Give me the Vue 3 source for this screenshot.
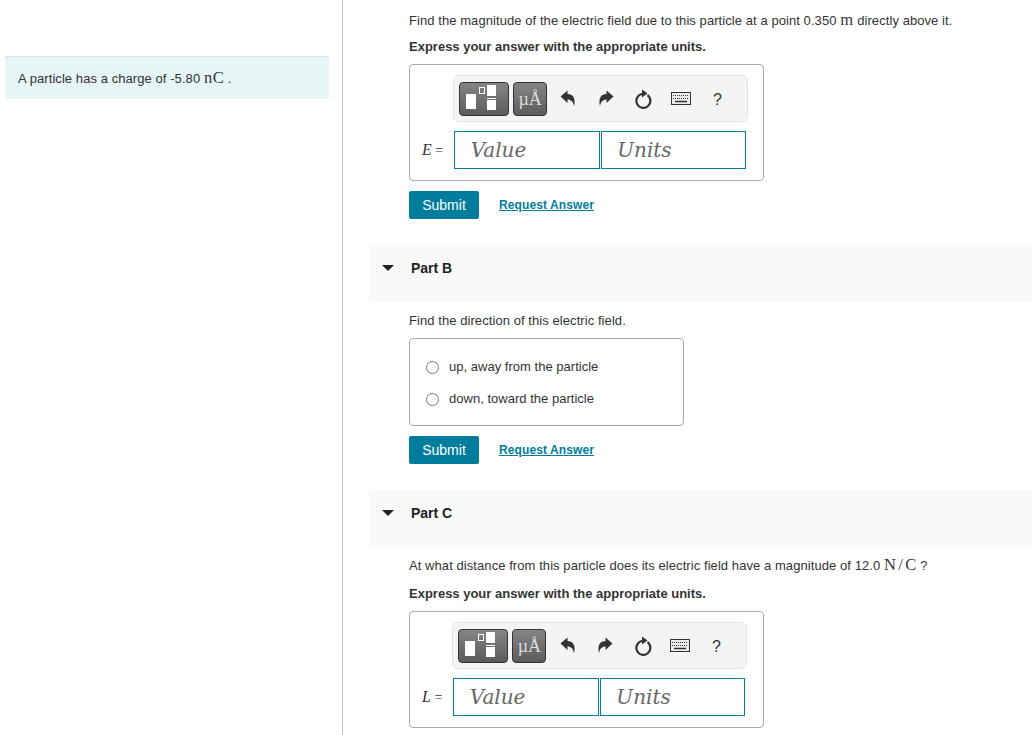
<template>
  <div class="page">
    <aside class="sidebar">
      <p class="intro">A particle has a charge of -5.80 <span class="math">nC</span> .</p>
    </aside>

    <main class="content">
      <section v-for="part in parts" :key="part.id" class="part">
        <header v-if="part.title" class="part-head">
          <span class="caret"></span>
          <h3>{{ part.title }}</h3>
        </header>

        <div class="part-body">
          <p class="prompt" :class="{ 'prompt-tall': part.tall }">
            {{ part.before }}<span v-if="part.math" class="math">{{ part.math }}</span>{{ part.after }}
          </p>
          <p v-if="part.symbol" class="express">Express your answer with the appropriate units.</p>

          <div v-if="part.symbol" class="answer-box">
            <div class="toolbar">
              <button class="tool tool-template" type="button" aria-label="Templates">
                <svg width="50" height="34" viewBox="0 0 50 34">
                  <rect x="7" y="12" width="10" height="15" fill="#fff" />
                  <rect x="20.5" y="5.5" width="5" height="6" fill="none" stroke="#fff" />
                  <rect x="28" y="3" width="9" height="11" fill="#fff" />
                  <rect x="28" y="16" width="9" height="1" fill="#fff" />
                  <rect x="28" y="18" width="9" height="10" fill="#fff" />
                </svg>
              </button>
              <button class="tool tool-symbol" type="button">&micro;&Aring;</button>
              <button class="tool-plain tool-undo" type="button" aria-label="Undo">
                <svg width="16" height="17" viewBox="0 0 16 17">
                  <path d="M.5 6.500 L7.500 .5 V4 C12.500 4 16 7.500 14 16.500 C13.500 12 11 9.500 7.500 9.500 V13 Z" fill="#333" />
                </svg>
              </button>
              <button class="tool-plain" type="button" aria-label="Redo">
                <svg width="16" height="17" viewBox="0 0 16 17">
                  <path d="M15.500 6.500 L8.500 .5 V4 C3.500 4 0 7.500 2 16.500 C2.500 12 5 9.500 8.500 9.500 V13 Z" fill="#333" />
                </svg>
              </button>
              <button class="tool-plain" type="button" aria-label="Reset">
                <svg width="18" height="20" viewBox="0 0 18 20">
                  <path d="M13.500 6.200 A7 7 0 1 1 8 5" fill="none" stroke="#333" stroke-width="2.200" />
                  <path d="M8 .5 L13.500 4.500 L8 8.500 Z" fill="#333" />
                </svg>
              </button>
              <button class="tool-plain" type="button" aria-label="Keyboard">
                <svg width="20" height="13" viewBox="0 0 20 13">
                  <rect x=".5" y=".5" width="19" height="12" fill="#ececec" stroke="#333" />
                  <path d="M2 3.500 H18 M2 6.500 H18" stroke="#333" stroke-dasharray="1 1" />
                  <path d="M4 9.500 H16" stroke="#333" stroke-width="1.500" />
                </svg>
              </button>
              <button class="tool-plain tool-help" type="button">?</button>
            </div>

            <label class="symbol"><i>{{ part.symbol }}</i> =</label>
            <div class="fields">
              <input class="field" type="text" placeholder="Value" />
              <input class="field" type="text" placeholder="Units" />
            </div>
          </div>

          <div v-else class="choice-box">
            <label v-for="option in part.options" :key="option" class="choice">
              <input type="radio" :name="part.id" />
              <span>{{ option }}</span>
            </label>
          </div>

          <div v-if="part.actions" class="actions">
            <button class="submit" type="button">Submit</button>
            <a class="request" href="#">Request Answer</a>
          </div>
        </div>
      </section>
    </main>
  </div>
</template>

<script setup>
const parts = [
  {
    id: 'a',
    before: 'Find the magnitude of the electric field due to this particle at a point 0.350 ',
    math: 'm',
    after: ' directly above it.',
    symbol: 'E',
    actions: true,
  },
  {
    id: 'b',
    title: 'Part B',
    before: 'Find the direction of this electric field.',
    options: ['up, away from the particle', 'down, toward the particle'],
    actions: true,
  },
  {
    id: 'c',
    title: 'Part C',
    before: 'At what distance from this particle does its electric field have a magnitude of 12.0 ',
    math: 'N\u200A/\u200AC',
    after: ' ?',
    symbol: 'L',
    tall: true,
    actions: false,
  },
]
</script>

<style scoped>
.page {
  display: flex;
  height: 735px;
  overflow: hidden;
  font-family: "Liberation Sans", Arial, sans-serif;
  font-size: 13px;
  line-height: 16px;
  color: #333;
}

.sidebar {
  flex: 0 0 343px;
  box-sizing: border-box;
  padding: 56px 13px 0 5px;
  border-right: 1px solid #b7cbd8;
}

.intro {
  margin: 0;
  padding: 13px;
  height: 16px;
  background: #e6f5f6;
  border-top: 1px solid #d9e2e4;
  letter-spacing: .07px;
}

.math {
  font-family: "Liberation Serif", "Times New Roman", serif;
  font-size: 16.500px;
  letter-spacing: .5px;
}

.content {
  flex: 1;
  min-width: 0;
  padding: 12px 0 0 26px;
}

.part-head {
  display: flex;
  align-items: flex-start;
  height: 57px;
  box-sizing: border-box;
  padding: 15px 0 0 13px;
  background: #f9f9f9;
}

.part-head h3 {
  margin: 0;
  font-size: 14px;
  line-height: 16px;
  font-weight: 700;
  color: #222;
}

.caret {
  width: 0;
  height: 0;
  margin: 5px 17px 0 0;
  border-left: 6px solid transparent;
  border-right: 6px solid transparent;
  border-top: 6px solid #222;
}

.part-body {
  padding: 0 0 26px 40px;
}

.part-head + .part-body {
  padding-top: 11px;
}

.prompt {
  margin: 0;
  height: 16px;
  letter-spacing: .07px;
  white-space: nowrap;
}

.prompt-tall {
  height: 18px;
  margin-top: -1px;
}

.express {
  margin: 11px 0 0;
  font-weight: 700;
}

.answer-box {
  display: grid;
  grid-template-columns: auto 1fr;
  column-gap: 11px;
  row-gap: 9px;
  align-items: center;
  align-content: start;
  box-sizing: border-box;
  width: 355px;
  height: 117px;
  margin-top: 9px;
  padding: 10px 15px 0 12px;
  border: 1px solid #aaa;
  border-radius: 4px;
}

.toolbar {
  grid-column: 2;
  display: flex;
  align-items: center;
  box-sizing: border-box;
  width: 295px;
  height: 47px;
  margin-left: -1px;
  padding-left: 5px;
  background: #f4f4f4;
  border: 1px solid #e2e2e2;
  border-radius: 6px;
}

.tool {
  display: block;
  box-sizing: border-box;
  height: 34px;
  padding: 0;
  border: 1px solid #333;
  border-radius: 4px;
  background: linear-gradient(#858585, #5c5c5c);
}

.tool svg {
  display: block;
  margin: -1px;
}

.tool-template {
  width: 50px;
  margin-right: 4px;
}

.tool-symbol {
  width: 34px;
  color: #dcdcdc;
  font-family: "Liberation Serif", serif;
  font-size: 18px;
  line-height: 30px;
}

.tool-plain {
  display: flex;
  align-items: center;
  justify-content: center;
  flex: 0 0 37.500px;
  height: 34px;
  padding: 0;
  border: 0;
  background: none;
  color: #333;
}

.tool-undo {
  margin-left: 2.500px;
}

.tool-help {
  padding: 2px 2px 0 0;
  font-size: 16px;
}

.symbol {
  grid-column: 1;
  font-family: "Liberation Serif", serif;
  font-size: 14px;
  white-space: nowrap;
}

.symbol i {
  font-size: 16px;
}

.fields {
  display: flex;
  gap: 1px;
}

.field {
  box-sizing: border-box;
  width: 145.500px;
  height: 38px;
  padding: 0 15.500px;
  border: 1px solid #007c9c;
  border-radius: 0;
  background: #fff;
  font-family: "DejaVu Serif", serif;
  font-style: italic;
  font-size: 20px;
  outline: none;
}

.field::placeholder {
  color: #666;
  opacity: 1;
}

.choice-box {
  display: flex;
  flex-direction: column;
  gap: 16px;
  box-sizing: border-box;
  width: 275px;
  height: 88px;
  margin-top: 9px;
  padding: 20px 16px 0;
  border: 1px solid #aaa;
  border-radius: 4px;
}

.choice {
  display: flex;
  align-items: center;
  gap: 10px;
  letter-spacing: .02px;
}

.choice input {
  appearance: none;
  box-sizing: border-box;
  width: 13px;
  height: 13px;
  margin: 0;
  border: 1.500px solid #777;
  border-radius: 50%;
  background: #fff;
}

.actions {
  display: flex;
  align-items: center;
  gap: 20px;
  margin-top: 10px;
}

.submit {
  width: 70px;
  height: 28px;
  padding: 0;
  border: 0;
  border-radius: 2px;
  background: #007c9c;
  color: #fff;
  font-family: inherit;
  font-size: 14px;
}

.request {
  color: #007c9c;
  font-size: 12px;
  font-weight: 700;
  letter-spacing: .1px;
}
</style>

<style>
body {
  background: #fff;
}
</style>
